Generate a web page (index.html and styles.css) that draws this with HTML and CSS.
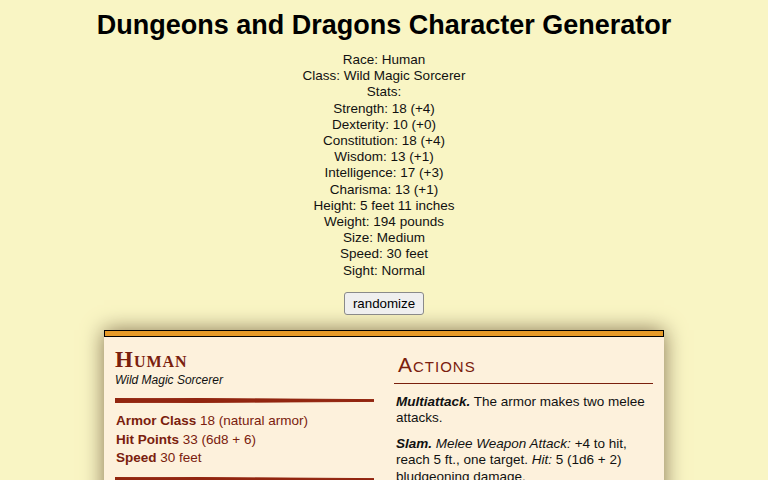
FILE: index.html
```html
<!DOCTYPE html>
<html lang="en">
<head>
<meta charset="utf-8">
<title>Dungeons and Dragons Character Generator</title>
<link rel="stylesheet" href="styles.css">
</head>
<body>
<h1 class="page-title">Dungeons and Dragons Character Generator</h1>
<div class="summary">
  <div>Race: Human</div>
  <div>Class: Wild Magic Sorcerer</div>
  <div>Stats:</div>
  <div>Strength: 18 (+4)</div>
  <div>Dexterity: 10 (+0)</div>
  <div>Constitution: 18 (+4)</div>
  <div>Wisdom: 13 (+1)</div>
  <div>Intelligence: 17 (+3)</div>
  <div>Charisma: 13 (+1)</div>
  <div>Height: 5 feet 11 inches</div>
  <div>Weight: 194 pounds</div>
  <div>Size: Medium</div>
  <div>Speed: 30 feet</div>
  <div>Sight: Normal</div>
</div>
<div class="actions-row"><button class="randomize" type="button">randomize</button></div>

<div class="stat-block">
  <div class="orange-border"></div>
  <div class="columns">
    <div class="col col-left">
      <h2 class="creature-name">Human</h2>
      <div class="creature-type">Wild Magic Sorcerer</div>
      <svg class="tapered-rule rule-top" height="5" width="100%"><polyline points="0,0 400,2.5 0,5"></polyline></svg>
      <div class="props">
        <div class="prop"><b>Armor Class</b> 18 (natural armor)</div>
        <div class="prop"><b>Hit Points</b> 33 (6d8 + 6)</div>
        <div class="prop"><b>Speed</b> 30 feet</div>
      </div>
      <svg class="tapered-rule rule-bottom" height="5" width="100%"><polyline points="0,0 400,2.5 0,5"></polyline></svg>
      <div class="abilities">
        <div class="ability"><b>STR</b><span>18 (+4)</span></div>
        <div class="ability"><b>DEX</b><span>10 (+0)</span></div>
        <div class="ability"><b>CON</b><span>18 (+4)</span></div>
        <div class="ability"><b>INT</b><span>17 (+3)</span></div>
        <div class="ability"><b>WIS</b><span>13 (+1)</span></div>
        <div class="ability"><b>CHA</b><span>13 (+1)</span></div>
      </div>
    </div>
    <div class="col col-right">
      <h3 class="section-title">Actions</h3>
      <p class="action"><b><i>Multiattack.</i></b> The armor makes two melee attacks.</p>
      <p class="action"><b><i>Slam.</i></b> <i>Melee Weapon Attack:</i> +4 to hit, reach 5 ft., one target. <i>Hit:</i> 5 (1d6 + 2) bludgeoning damage.</p>
    </div>
  </div>
</div>
</body>
</html>
```
FILE: styles.css
```css
html, body {
  margin: 0;
  padding: 0;
}
body {
  background: #f9f5c4;
  color: #111;
  font-family: "Liberation Sans", Arial, sans-serif;
  font-size: 13.5px;
  padding: 0 8px 40px;
}
.page-title {
  font-size: 27px;
  line-height: 31px;
  font-weight: bold;
  text-align: center;
  margin: 10px 0 11px;
  color: #000;
}
.summary {
  text-align: center;
  line-height: 16.2px;
}
.actions-row {
  text-align: center;
  margin-top: 13px;
}
.randomize {
  font-family: "Liberation Sans", Arial, sans-serif;
  font-size: 13.33px;
  line-height: 15px;
  padding: 3px 8px;
  border: 1px solid #8a8a8a;
  border-radius: 3px;
  background: #efefef;
  color: #000;
}
.stat-block {
  width: 560px;
  box-sizing: border-box;
  margin: 15px auto 0;
  background: #fdf1dc;
  box-shadow: 0 0 1.5em #867453;
  padding-bottom: 12px;
}
.orange-border {
  height: 5px;
  background: #e69a28;
  border: 1px solid #000;
}
.columns {
  display: grid;
  grid-template-columns: 1fr 1fr;
  column-gap: 20px;
  padding: 0 11px;
}
.creature-name {
  font-family: "Liberation Serif", "Times New Roman", serif;
  font-size: 23px;
  font-weight: bold;
  font-variant: small-caps;
  letter-spacing: 1px;
  color: #7a200d;
  margin: 10px 0 0;
  line-height: 26.5px;
}
.creature-type {
  font-style: italic;
  font-size: 12px;
  line-height: 14px;
  color: #111;
}
.tapered-rule {
  display: block;
  width: 100%;
  height: 5px;
  fill: #922610;
  stroke: #922610;
}
.rule-top {
  margin: 11px 0 9px;
}
.rule-bottom {
  margin: 9px 0 7px;
}
.props {
  color: #7a200d;
  line-height: 18.4px;
  padding-left: 1px;
}
.abilities {
  display: flex;
  justify-content: space-between;
  color: #7a200d;
  text-align: center;
}
.ability {
  display: flex;
  flex-direction: column;
}
.section-title {
  font-family: "Liberation Sans", Arial, sans-serif;
  font-size: 21px;
  font-weight: normal;
  font-variant: small-caps;
  letter-spacing: 1px;
  color: #7a200d;
  margin: 16px 0 10px;
  padding: 0 0 6px 4px;
  line-height: 24px;
  border-bottom: 1px solid #7a200d;
}
.action {
  margin: 0 0 10px;
  line-height: 16.2px;
  padding-left: 2px;
}
```
